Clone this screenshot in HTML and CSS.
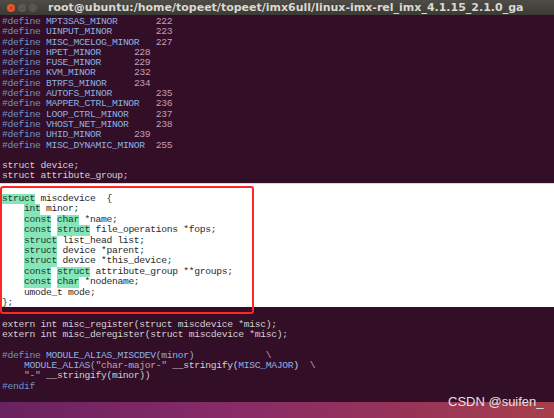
FILE: index.html
```html
<!DOCTYPE html>
<html>
<head>
    <meta charset="UTF-8">
    <link rel="stylesheet" href="styles.css">
</head>
<body>
    <div class="window">
        <!-- 标题栏 -->
        <div class="titlebar">
            <span class="btn close">×</span>
            <span class="btn">–</span>
            <span class="btn">□</span>
            <span class="title">root@ubuntu:/home/topeet/topeet/imx6ull/linux-imx-rel_imx_4.1.15_2.1.0_ga</span>
        </div>

        <!-- 终端上半部分 -->
<pre class="term top"><span class="pp">#define</span> <span class="id">MPT3SAS_MINOR</span>       <span class="num">222</span>
<span class="pp">#define</span> <span class="id">UINPUT_MINOR</span>        <span class="num">223</span>
<span class="pp">#define</span> <span class="id">MISC_MCELOG_MINOR</span>   <span class="num">227</span>
<span class="pp">#define</span> <span class="id">HPET_MINOR</span>      <span class="num">228</span>
<span class="pp">#define</span> <span class="id">FUSE_MINOR</span>      <span class="num">229</span>
<span class="pp">#define</span> <span class="id">KVM_MINOR</span>       <span class="num">232</span>
<span class="pp">#define</span> <span class="id">BTRFS_MINOR</span>     <span class="num">234</span>
<span class="pp">#define</span> <span class="id">AUTOFS_MINOR</span>        <span class="num">235</span>
<span class="pp">#define</span> <span class="id">MAPPER_CTRL_MINOR</span>   <span class="num">236</span>
<span class="pp">#define</span> <span class="id">LOOP_CTRL_MINOR</span>     <span class="num">237</span>
<span class="pp">#define</span> <span class="id">VHOST_NET_MINOR</span>     <span class="num">238</span>
<span class="pp">#define</span> <span class="id">UHID_MINOR</span>      <span class="num">239</span>
<span class="pp">#define</span> <span class="id">MISC_DYNAMIC_MINOR</span>  <span class="num">255</span>

struct device;
struct attribute_group;</pre>

        <!-- 中间的白色编辑器截图 -->
        <div class="band">
<pre class="code"><span class="kw">struct</span> miscdevice  {
    <span class="kw">int</span> minor;
    <span class="kw">const</span> <span class="kw">char</span> *name;
    <span class="kw">const</span> <span class="kw">struct</span> file_operations *fops;
    <span class="kw">struct</span> list_head list;
    <span class="kw">struct</span> device *parent;
    <span class="kw">struct</span> device *this_device;
    <span class="kw">const</span> <span class="kw">struct</span> attribute_group **groups;
    <span class="kw">const</span> <span class="kw">char</span> *nodename;
    umode_t mode;
};</pre>
        </div>

        <!-- 终端下半部分 -->
<pre class="term bottom">extern int misc_register(struct miscdevice *misc);
extern int misc_deregister(struct miscdevice *misc);

<span class="pp">#define</span> <span class="id">MODULE_ALIAS_MISCDEV(minor)</span>             <span class="num">\</span>
    <span class="id">MODULE_ALIAS(</span><span class="str">"char-major-"</span> __stringify(<span class="id">MISC_MAJOR</span>)  <span class="num">\</span>
    <span class="str">"-"</span> __stringify(minor))
<span class="pp">#endif</span></pre>

        <div class="desktop"></div>

        <!-- 红色框 -->
        <div class="redbox"></div>
        <div class="mark">CSDN @suifen_</div>
    </div>
</body>
</html>
```

FILE: styles.css
```css
body {
    margin: 0;
    background-color: #320e27;
    overflow: hidden;
}
.window {
    position: relative;
    width: 554px;
    height: 418px;
    display: flex;
    flex-direction: column;
    overflow: hidden;
}
.titlebar {
    height: 15px;
    flex: none;
    display: flex;
    align-items: center;
    background: linear-gradient(to bottom, #4d4c47, #3b3a36);
    padding-left: 7px;
    gap: 2px;
}
.btn {
    width: 8px;
    height: 8px;
    border-radius: 50%;
    background: #5a5955;
    color: #3a3936;
    font-size: 6px;
    line-height: 8px;
    text-align: center;
    font-family: 'DejaVu Sans', sans-serif;
    margin-right: 1px;
}
.btn.close {
    background: #e8572a;
    color: #8a2e12;
}
.title {
    margin-left: 8px;
    font-family: 'DejaVu Sans', sans-serif;
    font-weight: bold;
    font-size: 11px;
    color: #dcd8cf;
    white-space: nowrap;
}
pre {
    margin: 0;
    font-family: 'Liberation Mono', monospace;
    font-size: 9.7px;
    letter-spacing: -0.32px;
    line-height: 10.3px;
}
.term {
    flex: none;
    color: #d4cfd0;
    padding-left: 2px;
    box-sizing: border-box;
}
.term.top {
    height: 168px;
    padding-top: 2px;
}
.term.bottom {
    height: 95px;
    padding-top: 13px;
}
.pp {
    color: #6f93c4;
}
.id {
    color: #8db2e3;
}
.num {
    color: #c79db4;
}
.str {
    color: #c8a0b0;
}
.band {
    flex: none;
    height: 124px;
    box-sizing: border-box;
    background: #ffffff;
    border-top: 1px solid #d8d8d8;
    padding-top: 10px;
    padding-left: 2px;
}
.code {
    color: #2a2a2a;
    line-height: 10.4px;
}
.kw {
    display: inline-block;
    line-height: 10.4px;
    background: #86e6b8;
    color: #1f3a2c;
}
.desktop {
    flex: 1;
    background: linear-gradient(to right, #6a2260, #872b68 40%, #993458 75%, #a6404c);
}
.redbox {
    position: absolute;
    left: 0;
    top: 186px;
    width: 254px;
    height: 128px;
    box-sizing: border-box;
    border: 2px solid #ff2626;
    border-radius: 3px;
}
.mark {
    position: absolute;
    left: 448px;
    top: 394px;
    font-family: 'Liberation Sans', Arial, sans-serif;
    font-size: 13px;
    color: #e6e0e4;
}
```
